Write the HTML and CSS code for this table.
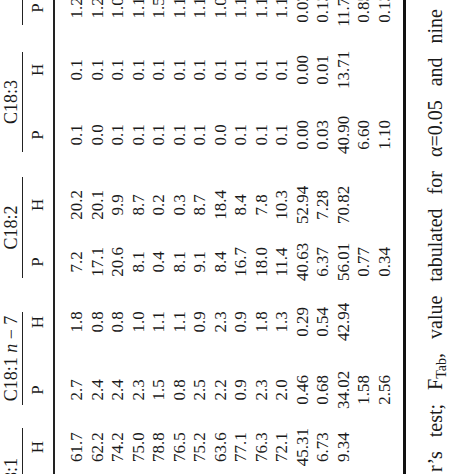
FILE: index.html
```html
<!DOCTYPE html>
<html lang="en">
<head>
<meta charset="utf-8">
<title>Table</title>
<link rel="stylesheet" href="styles.css">
</head>
<body>
<div class="page">
  <table class="tbl">
    <colgroup>
      <col class="c0"><col class="c1"><col class="c2"><col class="c3"><col class="c4"><col class="c5"><col class="c6"><col class="c7"><col class="c8">
    </colgroup>
    <thead>
      <tr class="groups">
        <th colspan="2"><div class="grp g0">C18:1</div></th>
        <th colspan="2"><div class="grp g1">C18:1 <i>n</i> − 7</div></th>
        <th colspan="2"><div class="grp g2">C18:2</div></th>
        <th colspan="2"><div class="grp g3">C18:3</div></th>
        <th><div class="grp g4">&nbsp;</div></th>
      </tr>
      <tr class="subs">
        <th>P</th><th>H</th><th>P</th><th>H</th><th>P</th><th>H</th><th>P</th><th>H</th><th>P</th>
      </tr>
    </thead>
    <tbody>
      <tr><td></td><td>61.7</td><td>2.7</td><td>1.8</td><td>7.2</td><td>20.2</td><td>0.1</td><td>0.1</td><td>1.2</td></tr>
      <tr><td></td><td>62.2</td><td>2.4</td><td>0.8</td><td>17.1</td><td>20.1</td><td>0.0</td><td>0.1</td><td>1.2</td></tr>
      <tr><td></td><td>74.2</td><td>2.4</td><td>0.8</td><td>20.6</td><td>9.9</td><td>0.1</td><td>0.1</td><td>1.0</td></tr>
      <tr><td></td><td>75.0</td><td>2.3</td><td>1.0</td><td>8.1</td><td>8.7</td><td>0.1</td><td>0.1</td><td>1.1</td></tr>
      <tr><td></td><td>78.8</td><td>1.5</td><td>1.1</td><td>0.4</td><td>0.2</td><td>0.1</td><td>0.1</td><td>1.5</td></tr>
      <tr><td></td><td>76.5</td><td>0.8</td><td>1.1</td><td>8.1</td><td>0.3</td><td>0.1</td><td>0.1</td><td>1.1</td></tr>
      <tr><td></td><td>75.2</td><td>2.5</td><td>0.9</td><td>9.1</td><td>8.7</td><td>0.1</td><td>0.1</td><td>1.1</td></tr>
      <tr><td></td><td>63.6</td><td>2.2</td><td>2.3</td><td>8.4</td><td>18.4</td><td>0.0</td><td>0.1</td><td>1.0</td></tr>
      <tr><td></td><td>77.1</td><td>0.9</td><td>0.9</td><td>16.7</td><td>8.4</td><td>0.1</td><td>0.1</td><td>1.1</td></tr>
      <tr><td></td><td>76.3</td><td>2.3</td><td>1.8</td><td>18.0</td><td>7.8</td><td>0.1</td><td>0.1</td><td>1.1</td></tr>
      <tr><td></td><td>72.1</td><td>2.0</td><td>1.3</td><td>11.4</td><td>10.3</td><td>0.1</td><td>0.1</td><td>1.1</td></tr>
      <tr><td></td><td>45.31</td><td>0.46</td><td>0.29</td><td>40.63</td><td>52.94</td><td>0.00</td><td>0.00</td><td>0.02</td></tr>
      <tr><td></td><td>6.73</td><td>0.68</td><td>0.54</td><td>6.37</td><td>7.28</td><td>0.03</td><td>0.01</td><td>0.13</td></tr>
      <tr><td></td><td>9.34</td><td>34.02</td><td>42.94</td><td>56.01</td><td>70.82</td><td>40.90</td><td>13.71</td><td>11.72</td></tr>
      <tr><td></td><td></td><td>1.58</td><td></td><td>0.77</td><td></td><td>6.60</td><td></td><td>0.85</td></tr>
      <tr><td></td><td></td><td>2.56</td><td></td><td>0.34</td><td></td><td>1.10</td><td></td><td>0.13</td></tr>
    </tbody>
  </table>
  <p class="note">r’s test; F<sub class="sub">Tab</sub>, value tabulated for α=0.05 and nine degrees of freedom.</p>
</div>
</body>
</html>
```
FILE: styles.css
```css
html, body {
  margin: 0;
  padding: 0;
  background: #fff;
}

.page {
  width: 474px;
  height: 474px;
  overflow: hidden;
  background: #fff;
  color: #1a1a1a;
  font-family: "Liberation Serif", "Times New Roman", serif;
  transform: rotate(-90deg);
}

.tbl {
  table-layout: fixed;
  width: 558px;
  margin-left: -60px;
  border-collapse: separate;
  border-spacing: 0;
  font-size: 17px;
}

.c0 { width: 60px; }
.c1 { width: 54px; }
.c2 { width: 60px; }
.c3 { width: 76px; }
.c4 { width: 44px; }
.c5 { width: 70px; }
.c6 { width: 70px; }
.c7 { width: 60px; }
.c8 { width: 64px; }

.tbl th {
  font-weight: normal;
  padding: 0;
  text-align: center;
  white-space: nowrap;
}

.grp {
  font-size: 18px;
  line-height: 22px;
  border-bottom: 1px solid #222;
  text-align: center;
  white-space: nowrap;
}

.g0 { margin: 0 8px 0 2px; }
.g1 { margin: 0 28px 0 15px; }
.g2 { margin: 0 7px 0 6px; }
.g3 { margin: 0 12px 0 18px; }
.g4 { margin: 0 0 0 15px; }

.subs th {
  line-height: 20px;
  padding: 5px 0;
  border-bottom: 2px solid #222;
}

.tbl td {
  padding: 0;
  line-height: 20.5px;
  text-align: center;
  white-space: nowrap;
}

.tbl tbody tr:first-child td {
  padding-top: 12px;
}

.tbl tbody tr:last-child td {
  padding-bottom: 8px;
  border-bottom: 3px solid #111;
}

.note {
  margin: 17px 0 0 2px;
  font-size: 20px;
  line-height: 24px;
  white-space: nowrap;
  word-spacing: 9px;
}

.sub {
  font-size: 0.7em;
  line-height: 0;
  vertical-align: -0.3em;
  word-spacing: 0;
}
```
